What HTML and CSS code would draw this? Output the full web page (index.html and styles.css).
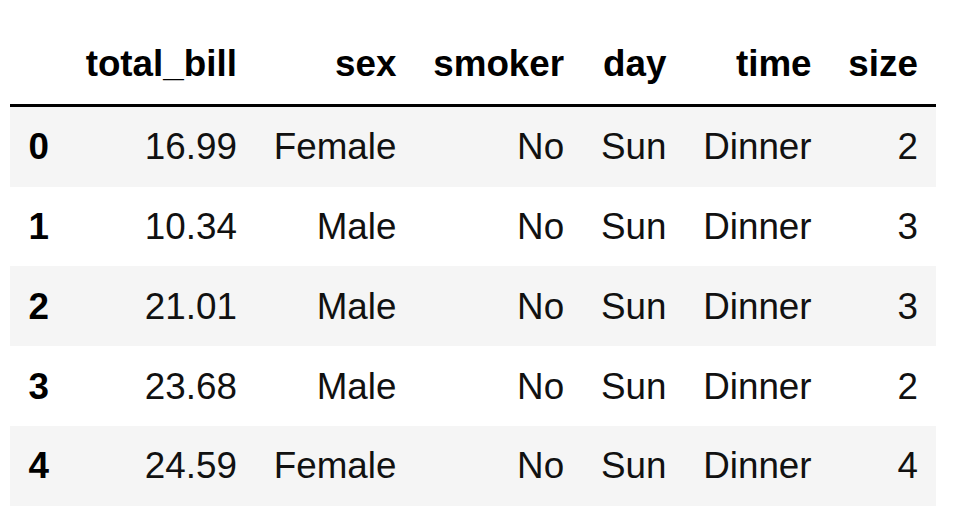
FILE: index.html
```html
<!DOCTYPE html>
<html lang="en">
<head>
<meta charset="utf-8">
<title>tips.head()</title>
<link rel="stylesheet" href="styles.css">
</head>
<body>
<div class="output">
  <table class="dataframe">
    <thead>
      <tr>
        <th class="blank"></th>
        <th>total_bill</th>
        <th>sex</th>
        <th>smoker</th>
        <th>day</th>
        <th>time</th>
        <th>size</th>
      </tr>
    </thead>
    <tbody>
      <tr><th class="idx">0</th><td>16.99</td><td>Female</td><td>No</td><td>Sun</td><td>Dinner</td><td>2</td></tr>
      <tr><th class="idx">1</th><td>10.34</td><td>Male</td><td>No</td><td>Sun</td><td>Dinner</td><td>3</td></tr>
      <tr><th class="idx">2</th><td>21.01</td><td>Male</td><td>No</td><td>Sun</td><td>Dinner</td><td>3</td></tr>
      <tr><th class="idx">3</th><td>23.68</td><td>Male</td><td>No</td><td>Sun</td><td>Dinner</td><td>2</td></tr>
      <tr><th class="idx">4</th><td>24.59</td><td>Female</td><td>No</td><td>Sun</td><td>Dinner</td><td>4</td></tr>
    </tbody>
  </table>
</div>
</body>
</html>
```
FILE: styles.css
```css
html, body {
  margin: 0;
  padding: 0;
  background: #ffffff;
}

.output {
  padding: 24px 0 0 10px;
}

.dataframe {
  border-collapse: collapse;
  border-spacing: 0;
  border: none;
  font-family: "Liberation Sans", Arial, sans-serif;
  font-size: 36.8px;
  color: #111111;
}

.dataframe thead {
  border-bottom: 3px solid #000000;
}

.dataframe th,
.dataframe td {
  text-align: right;
  vertical-align: middle;
  padding: 18.4px 18.4px;
  line-height: 43px;
  white-space: nowrap;
  border: none;
}

.dataframe th {
  font-weight: bold;
  color: #000000;
}

.dataframe tbody th.idx {
  text-align: left;
}

.dataframe tbody tr:nth-child(odd) {
  background: #f5f5f5;
}
```
